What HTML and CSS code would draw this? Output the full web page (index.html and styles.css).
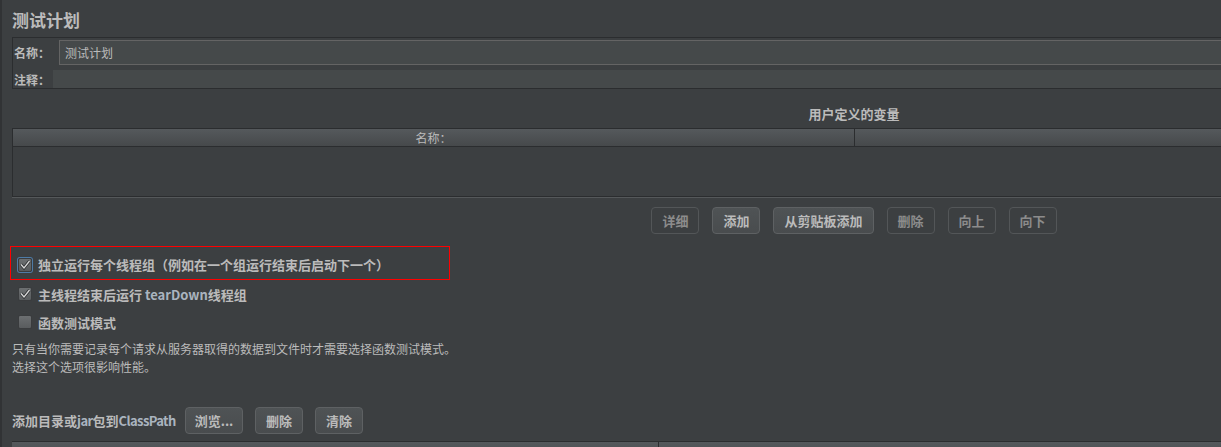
FILE: index.html
```html
<!DOCTYPE html>
<html lang="zh-CN">
<head>
<meta charset="utf-8">
<title>测试计划</title>
<link rel="stylesheet" href="styles.css">
</head>
<body>
<div class="page">
  <div class="title">测试计划</div>

  <div class="panel">
    <div class="prow r1">
      <span class="plabel w1">名称：</span>
      <div class="field">测试计划</div>
    </div>
    <div class="prow r2">
      <span class="plabel w2">注释：</span>
      <div class="area"></div>
    </div>
  </div>

  <div class="vars-title">用户定义的变量</div>
  <div class="table">
    <div class="thead">
      <div class="th first">名称：</div>
      <div class="th"></div>
    </div>
    <div class="tbody"></div>
  </div>

  <div class="btnrow">
    <button class="btn dis">详细</button>
    <button class="btn">添加</button>
    <button class="btn">从剪贴板添加</button>
    <button class="btn dis">删除</button>
    <button class="btn dis">向上</button>
    <button class="btn dis">向下</button>
  </div>

  <div class="highlight">
    <div class="cbrow in-box">
      <span class="cb checked focus">
        <svg viewBox="0 0 14 14" width="14" height="14"><path d="M3 6.5 L6 10 L11.5 3" class="ck-dark"/><path d="M3 6.5 L6 10 L11.5 3" class="ck-light"/></svg>
      </span>
      <span class="cbtext">独立运行每个线程组（例如在一个组运行结束后启动下一个）</span>
    </div>
  </div>
  <div class="cbrow">
    <span class="cb checked">
      <svg viewBox="0 0 14 14" width="14" height="14"><path d="M3 6.5 L6 10 L11.5 3" class="ck-dark"/><path d="M3 6.5 L6 10 L11.5 3" class="ck-light"/></svg>
    </span>
    <span class="cbtext">主线程结束后运行 <span class="latin">tearDown</span>线程组</span>
  </div>
  <div class="cbrow">
    <span class="cb"></span>
    <span class="cbtext">函数测试模式</span>
  </div>

  <p class="desc">只有当你需要记录每个请求从服务器取得的数据到文件时才需要选择函数测试模式。<br>选择这个选项很影响性能。</p>

  <div class="cprow">
    <span class="cplabel">添加目录或<span class="latin tight">jar</span>包到<span class="latin tight">ClassPath</span></span>
    <button class="btn wide">浏览...</button>
    <button class="btn">删除</button>
    <button class="btn">清除</button>
  </div>

  <div class="cptable">
    <div class="cphead"><div class="cpth"></div><div class="cpth"></div></div>
  </div>
</div>
</body>
</html>
```

FILE: styles.css
```css
html {
  overflow: hidden;
  background: #3c3f41;
}
body {
  margin: 0;
  height: 447px;
  overflow: hidden;
  background: #3c3f41;
  border-left: 2px solid #313335;
  font-family: "Noto Sans CJK SC", "Noto Sans", sans-serif;
  color: #bbbbbb;
}
.page {
  width: 1684px;
  padding: 10px 0 0 10px;
  display: flex;
  flex-direction: column;
}

.title {
  font-size: 17px;
  font-weight: bold;
  line-height: 20px;
  height: 20px;
}

/* name / comment panel */
.panel {
  margin-top: 7px;
  border: 1px solid #2b2d2f;
  padding-top: 2px;
  display: flex;
  flex-direction: column;
}
.prow {
  display: flex;
  align-items: center;
}
.r1 { height: 25px; }
.r2 { height: 18px; margin-top: 5px; }
.plabel {
  font-size: 12px;
  font-weight: bold;
  padding-left: 1px;
  white-space: nowrap;
  flex: none;
}
.w1 { width: 45px; }
.w2 { width: 39px; }
.field {
  flex: 1;
  height: 25px;
  box-sizing: border-box;
  border: 1px solid #646464;
  background: #45494a;
  font-size: 12px;
  line-height: 23px;
  padding-left: 5px;
}
.area {
  flex: 1;
  height: 18px;
  background: #45494a;
}

/* user variables table */
.vars-title {
  margin-top: 17px;
  line-height: 16px;
  font-size: 13px;
  font-weight: bold;
  text-align: center;
}
.table {
  margin-top: 6px;
  border: 1px solid #2b2d2f;
  box-shadow: 0 1px 0 #55585a;
}
.thead {
  display: flex;
  height: 17px;
  border-bottom: 1px solid #2b2d2f;
  background: linear-gradient(#55595c, #46494b);
}
.th {
  flex: 1;
  font-size: 12px;
  line-height: 17px;
  text-align: center;
  box-sizing: border-box;
}
.th.first {
  flex: none;
  width: 842px;
  border-right: 1px solid #2b2d2f;
}
.tbody {
  height: 49px;
}

/* buttons */
.btnrow {
  margin-top: 10px;
  display: flex;
  justify-content: center;
  gap: 13px;
}
.btn {
  height: 27px;
  min-width: 48px;
  padding: 0 10px;
  box-sizing: border-box;
  border: 1px solid #5e6163;
  border-radius: 4px;
  background: linear-gradient(#4f5355, #494c4e);
  color: #bbbbbb;
  font-family: "Noto Sans CJK SC", "Noto Sans", sans-serif;
  font-size: 13px;
  font-weight: bold;
  line-height: 25px;
  white-space: nowrap;
}
.btn.dis {
  background: #3c3f41;
  border-color: #535658;
  color: #8c8c8c;
}
.btn.wide {
  width: 58px;
  padding: 0 6px;
}

/* checkboxes */
.highlight {
  align-self: flex-start;
  margin-top: 12px;
  margin-left: -2px;
  width: 440px;
  height: 34px;
  box-sizing: border-box;
  border: 1px solid #ff0000;
}
.cbrow {
  display: flex;
  align-items: center;
  height: 28px;
  padding-left: 6px;
}
.cbrow.in-box {
  height: 29px;
  padding-top: 3px;
  padding-left: 7px;
}
.cb {
  flex: none;
  width: 14px;
  height: 14px;
  box-sizing: border-box;
  border: 1px solid #3a3c3e;
  border-radius: 2px;
  background: linear-gradient(#6c6f71, #595c5e);
  margin-right: 6px;
  display: flex;
}
.cb svg {
  margin: -1px;
}
.cb.focus {
  box-shadow: 0 0 0 1px #4e7ba6;
}
.ck-dark {
  fill: none;
  stroke: #2f3133;
  stroke-width: 3;
}
.ck-light {
  fill: none;
  stroke: #d8d8d8;
  stroke-width: 1.3;
}
.cbtext {
  font-size: 13px;
  font-weight: bold;
  white-space: nowrap;
}
.latin {
  color: #aab4bf;
}
.latin.tight {
  letter-spacing: -0.6px;
}

.desc {
  margin: 4px 0 0;
  font-size: 12px;
  line-height: 18px;
}

/* classpath row */
.cprow {
  margin-top: 31px;
  display: flex;
  align-items: center;
  gap: 12px;
  height: 27px;
}
.cplabel {
  flex: none;
  width: 161px;
  font-size: 13px;
  font-weight: bold;
  white-space: nowrap;
}
.cptable {
  margin-top: 7px;
  border-top: 1px solid #2b2d2f;
}
.cphead {
  display: flex;
  height: 18px;
  background: linear-gradient(#55595c, #46494b);
}
.cpth {
  flex: 1;
}
.cpth:first-child {
  flex: none;
  width: 646px;
  border-right: 1px solid #2b2d2f;
}
```
